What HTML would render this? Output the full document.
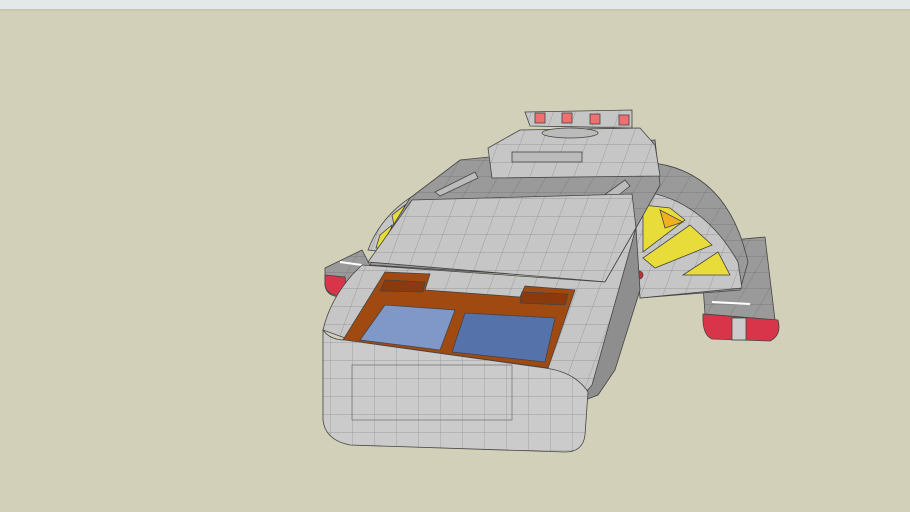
<!DOCTYPE html>
<html><head><style>
html,body{margin:0;padding:0;width:910px;height:512px;overflow:hidden;background:#d2d0b8}
.top{position:absolute;left:0;top:0;width:910px;height:9px;background:#e3e9e8;border-bottom:2px solid #c9c7b3}
svg{position:absolute;left:0;top:0}
</style></head><body>
<div class="top"></div>
<svg width="910" height="512" viewBox="0 0 910 512">
<defs>
<pattern id="g" width="22" height="18" patternUnits="userSpaceOnUse" patternTransform="skewX(-20)">
<rect width="22" height="18" fill="#c6c6c6"/><path d="M0 0H22M0 0V18" stroke="#888" stroke-width="0.7"/></pattern>
<pattern id="d" width="24" height="16" patternUnits="userSpaceOnUse" patternTransform="skewX(-30)">
<rect width="24" height="16" fill="#9a9a9a"/><path d="M0 0H24M0 0V16" stroke="#6e6e6e" stroke-width="0.7"/></pattern>
<pattern id="f" width="22" height="18" patternUnits="userSpaceOnUse">
<rect width="22" height="18" fill="#cbcbcb"/><path d="M0 0H22M0 0V18" stroke="#8f8f8f" stroke-width="0.7"/></pattern>
</defs>
<g stroke="#444" stroke-width="0.8">
<path d="M700 243 L765 237 L775 320 L705 314 Z" fill="url(#d)"/>
<path d="M703 314 L778 320 Q782 335 770 341 L712 339 Q702 335 703 314Z" fill="#d8354a"/>
<rect x="732" y="318" width="14" height="22" fill="#ccc"/>
<line x1="712" y1="302" x2="750" y2="304" stroke="#fff" stroke-width="2"/>
<path d="M632 162 Q725 160 748 262 L740 290 L640 298 Z" fill="url(#d)"/>
<path d="M632 190 Q700 195 738 262 L742 288 L640 298 Z" fill="url(#g)"/>
<polygon points="643,205 670,208 685,220 643,252" fill="#e8dc3a"/>
<polygon points="660,210 683,222 665,228" fill="#f0b020"/>
<polygon points="643,258 690,225 712,245 655,268" fill="#e8dc3a"/>
<polygon points="683,275 718,252 730,275" fill="#e8dc3a"/>
<circle cx="640" cy="200" r="4" fill="#c0303a"/><circle cx="639" cy="275" r="4" fill="#c0303a"/>
<path d="M325 268 L362 250 L375 275 L340 297 Q326 296 325 285Z" fill="url(#d)"/>
<path d="M325 275 L345 277 L347 297 Q326 296 325 285Z" fill="#d8354a"/>
<line x1="340" y1="262" x2="362" y2="265" stroke="#fff" stroke-width="2"/>
<path d="M368 250 Q385 205 435 185 L420 255 Z" fill="url(#g)"/>
<polygon points="392,215 405,205 395,230" fill="#e8dc3a"/>
<polygon points="380,235 392,225 385,248 376,248" fill="#e8dc3a"/>
<polygon points="410,198 460,160 655,140 660,185 636,228 605,280 370,265 378,250" fill="url(#d)"/>
<polygon points="488,148 520,130 640,128 655,145 660,176 492,178" fill="url(#g)"/>
<polygon points="530,126 525,112 632,110 632,128" fill="url(#g)"/>
<rect x="535" y="113" width="10" height="10" fill="#f07070"/><rect x="562" y="113" width="10" height="10" fill="#f07070"/><rect x="590" y="114" width="10" height="10" fill="#f07070"/><rect x="619" y="115" width="10" height="10" fill="#f07070"/>
<ellipse cx="570" cy="133" rx="28" ry="5" fill="#bbb"/>
<rect x="512" y="152" width="70" height="10" fill="#bbb"/>
<polygon points="435,192 475,172 478,178 440,196" fill="#bbb"/>
<polygon points="600,198 625,180 630,186 605,206" fill="#bbb"/>
<polygon points="412,200 632,194 636,228 607,282 368,262" fill="url(#g)"/>
<polygon points="636,228 640,290 615,370 598,395 585,400 605,282" fill="#8e8e8e"/>
<path d="M323 330 Q330 300 352 275 L362 265 L605 282 L636 228 L592 385 Q582 398 570 398 L345 338 Z" fill="url(#g)"/>
<polygon points="343,340 385,272 430,274 425,290 520,297 525,286 575,290 548,368" fill="#a04a12"/>
<polygon points="360,340 385,305 455,310 440,350" fill="#7f98c8"/>
<polygon points="452,352 465,313 555,318 545,362" fill="#5572aa"/>
<polygon points="385,280 425,282 423,292 380,291" fill="#8a3a0c"/>
<polygon points="522,292 568,294 565,305 520,303" fill="#8a3a0c"/>
<path d="M323 330 Q330 340 345 340 L545 368 Q575 372 588 392 L585 435 Q583 452 565 452 L350 445 Q325 440 323 420 Z" fill="url(#f)"/>
<rect x="352" y="365" width="160" height="55" fill="none" stroke="#777"/>
</g>
</svg>
</body></html>
